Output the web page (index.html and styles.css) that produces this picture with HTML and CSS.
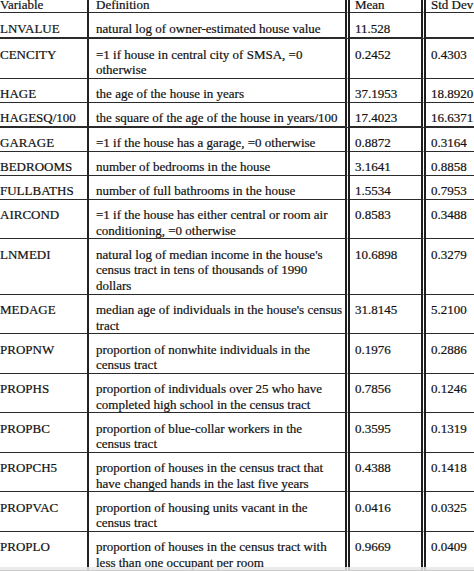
FILE: index.html
```html
<!DOCTYPE html>
<html lang="en">
<head>
<meta charset="utf-8">
<title>Variable definitions</title>
<link rel="stylesheet" href="styles.css">
</head>
<body>
<div class="page">
  <table class="vars">
    <thead>
      <tr>
        <th class="c-var">Variable</th>
        <th class="c-def">Definition</th>
        <th class="c-mean">Mean</th>
        <th class="c-sd">Std Dev</th>
      </tr>
    </thead>
    <tbody>
      <tr class="thick lead">
        <td class="c-var">LNVALUE</td>
        <td class="c-def">natural log of owner-estimated house value</td>
        <td class="c-mean">11.528</td>
        <td class="c-sd"></td>
      </tr>
      <tr>
        <td class="c-var">CENCITY</td>
        <td class="c-def">=1 if house in central city of SMSA, =0<br>otherwise</td>
        <td class="c-mean">0.2452</td>
        <td class="c-sd">0.4303</td>
      </tr>
      <tr>
        <td class="c-var">HAGE</td>
        <td class="c-def">the age of the house in years</td>
        <td class="c-mean">37.1953</td>
        <td class="c-sd">18.8920</td>
      </tr>
      <tr class="thick">
        <td class="c-var">HAGESQ/100</td>
        <td class="c-def">the square of the age of the house in years/100</td>
        <td class="c-mean">17.4023</td>
        <td class="c-sd">16.6371</td>
      </tr>
      <tr>
        <td class="c-var">GARAGE</td>
        <td class="c-def">=1 if the house has a garage, =0 otherwise</td>
        <td class="c-mean">0.8872</td>
        <td class="c-sd">0.3164</td>
      </tr>
      <tr>
        <td class="c-var">BEDROOMS</td>
        <td class="c-def">number of bedrooms in the house</td>
        <td class="c-mean">3.1641</td>
        <td class="c-sd">0.8858</td>
      </tr>
      <tr>
        <td class="c-var">FULLBATHS</td>
        <td class="c-def">number of full bathrooms in the house</td>
        <td class="c-mean">1.5534</td>
        <td class="c-sd">0.7953</td>
      </tr>
      <tr>
        <td class="c-var">AIRCOND</td>
        <td class="c-def">=1 if the house has either central or room air<br>conditioning, =0 otherwise</td>
        <td class="c-mean">0.8583</td>
        <td class="c-sd">0.3488</td>
      </tr>
      <tr class="tall">
        <td class="c-var">LNMEDI</td>
        <td class="c-def">natural log of median income in the house's<br>census tract in tens of thousands of 1990<br>dollars</td>
        <td class="c-mean">10.6898</td>
        <td class="c-sd">0.3279</td>
      </tr>
      <tr>
        <td class="c-var">MEDAGE</td>
        <td class="c-def">median age of individuals in the house's census<br>tract</td>
        <td class="c-mean">31.8145</td>
        <td class="c-sd">5.2100</td>
      </tr>
      <tr>
        <td class="c-var">PROPNW</td>
        <td class="c-def">proportion of nonwhite individuals in the<br>census tract</td>
        <td class="c-mean">0.1976</td>
        <td class="c-sd">0.2886</td>
      </tr>
      <tr>
        <td class="c-var">PROPHS</td>
        <td class="c-def">proportion of individuals over 25 who have<br>completed high school in the census tract</td>
        <td class="c-mean">0.7856</td>
        <td class="c-sd">0.1246</td>
      </tr>
      <tr>
        <td class="c-var">PROPBC</td>
        <td class="c-def">proportion of blue-collar workers in the<br>census tract</td>
        <td class="c-mean">0.3595</td>
        <td class="c-sd">0.1319</td>
      </tr>
      <tr>
        <td class="c-var">PROPCH5</td>
        <td class="c-def">proportion of houses in the census tract that<br>have changed hands in the last five years</td>
        <td class="c-mean">0.4388</td>
        <td class="c-sd">0.1418</td>
      </tr>
      <tr>
        <td class="c-var">PROPVAC</td>
        <td class="c-def">proportion of housing units vacant in the<br>census tract</td>
        <td class="c-mean">0.0416</td>
        <td class="c-sd">0.0325</td>
      </tr>
      <tr>
        <td class="c-var">PROPLO</td>
        <td class="c-def">proportion of houses in the census tract with<br>less than one occupant per room</td>
        <td class="c-mean">0.9669</td>
        <td class="c-sd">0.0409</td>
      </tr>
    </tbody>
  </table>
  <div class="fade"></div>
</div>
</body>
</html>
```

FILE: styles.css
```css
html, body {
  margin: 0;
  padding: 0;
  overflow: hidden;
  background: #ffffff;
}

body {
  font-family: "Liberation Serif", "Times New Roman", serif;
  font-size: 13px;
  color: #111111;
}

.page {
  position: relative;
  width: 474px;
  height: 571px;
  overflow: hidden;
}

.vars {
  border-collapse: separate;
  border-spacing: 0;
  table-layout: fixed;
  width: 509px;
  margin: -11px 0 0 -9px;
}

.vars th,
.vars td {
  box-sizing: border-box;
  padding: 7.5px 2px 0 7px;
  line-height: 15.5px;
  vertical-align: top;
  text-align: left;
  font-weight: normal;
  white-space: nowrap;
  -webkit-text-stroke: 0.2px #111111;
  border-bottom: 1px solid #2b2b2b;
}

.vars .c-var {
  width: 98px;
  padding-left: 9px;
  border-right: 2px solid #222222;
}

.vars .c-def {
  width: 261px;
  border-right: 5px double #1e1e1e;
}

.vars .c-mean {
  width: 76px;
  padding-left: 5px;
  border-right: 5px double #1e1e1e;
}

.vars .c-sd {
  width: 74px;
  padding-left: 5px;
}

.vars .thick td {
  border-bottom-width: 2px;
}

.vars .lead td {
  padding-bottom: 1px;
}

.vars .tall td {
  padding-bottom: 0.5px;
}

.fade {
  position: absolute;
  left: 0;
  right: 0;
  bottom: 0;
  height: 4px;
  background: rgba(232, 232, 232, 0.85);
}
```
